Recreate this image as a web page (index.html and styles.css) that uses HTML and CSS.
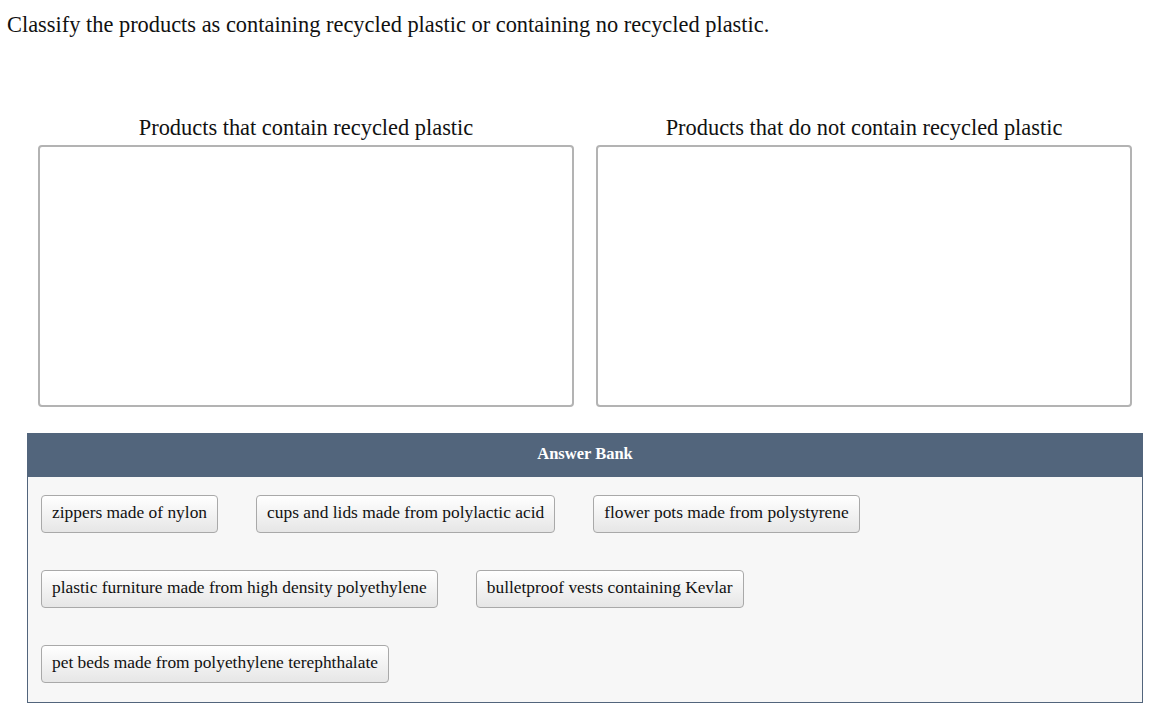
FILE: index.html
```html
<!DOCTYPE html>
<html>
<head>
<meta charset="utf-8">
<link rel="stylesheet" href="styles.css">
</head>
<body>
<p class="prompt">Classify the products as containing recycled plastic or containing no recycled plastic.</p>
<div class="bins">
  <div class="bin">
    <div class="bin-title">Products that contain recycled plastic</div>
    <div class="bin-box"></div>
  </div>
  <div class="bin">
    <div class="bin-title">Products that do not contain recycled plastic</div>
    <div class="bin-box"></div>
  </div>
</div>
<div class="bank">
  <div class="bank-head">Answer Bank</div>
  <div class="bank-body">
    <div class="chip">zippers made of nylon</div>
    <div class="chip">cups and lids made from polylactic acid</div>
    <div class="chip">flower pots made from polystyrene</div>
    <div class="chip">plastic furniture made from high density polyethylene</div>
    <div class="chip">bulletproof vests containing Kevlar</div>
    <div class="chip">pet beds made from polyethylene terephthalate</div>
  </div>
</div>
</body>
</html>
```
FILE: styles.css
```css
html, body {
  margin: 0;
  padding: 0;
  background: #fff;
}
body {
  font-family: "Liberation Serif", "Times New Roman", serif;
  color: #111;
}
.prompt {
  margin: 0;
  padding: 12px 0 0 7px;
  font-size: 22.4px;
  line-height: 26px;
}
.bins {
  display: flex;
  gap: 22px;
  margin: 77px 0 0 38px;
  width: 1094px;
}
.bin {
  flex: 1;
  display: flex;
  flex-direction: column;
}
.bin-title {
  text-align: center;
  font-size: 22.4px;
  line-height: 26px;
  margin-bottom: 4px;
}
.bin-box {
  height: 258px;
  border: 2px solid #b3b3b3;
  border-radius: 4px;
  background: #fff;
}
.bank {
  margin: 26px 0 0 27px;
  width: 1116px;
}
.bank-head {
  background: #52657c;
  color: #fff;
  height: 44px;
  line-height: 42px;
  text-align: center;
  font-size: 16.5px;
  font-weight: bold;
}
.bank-body {
  background: #f7f7f7;
  border: 1px solid #52657c;
  border-top: none;
  display: flex;
  flex-wrap: wrap;
  align-items: flex-start;
  column-gap: 38px;
  row-gap: 37px;
  padding: 18px 40px 19px 13px;
}
.chip {
  height: 32px;
  line-height: 32px;
  padding: 0 10px 4px;
  border: 1px solid #a9a9a9;
  border-radius: 4px;
  background: linear-gradient(#ffffff, #e6e6e6);
  font-size: 17.4px;
  color: #111;
  white-space: nowrap;
}
```
